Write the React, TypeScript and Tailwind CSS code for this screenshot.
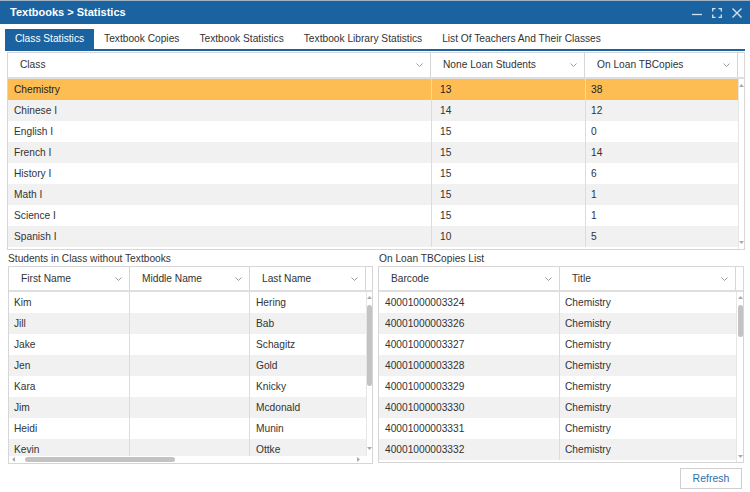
import React from "react";

const classes = [
  { name: "Chemistry", none: "13", loan: "38" },
  { name: "Chinese I", none: "14", loan: "12" },
  { name: "English I", none: "15", loan: "0" },
  { name: "French I", none: "15", loan: "14" },
  { name: "History I", none: "15", loan: "6" },
  { name: "Math I", none: "15", loan: "1" },
  { name: "Science I", none: "15", loan: "1" },
  { name: "Spanish I", none: "10", loan: "5" },
];

const students = [
  ["Kim", "Hering"],
  ["Jill", "Bab"],
  ["Jake", "Schagitz"],
  ["Jen", "Gold"],
  ["Kara", "Knicky"],
  ["Jim", "Mcdonald"],
  ["Heidi", "Munin"],
  ["Kevin", "Ottke"],
];

const barcodes = [
  "40001000003324",
  "40001000003326",
  "40001000003327",
  "40001000003328",
  "40001000003329",
  "40001000003330",
  "40001000003331",
  "40001000003332",
];

const tabs = [
  "Class Statistics",
  "Textbook Copies",
  "Textbook Statistics",
  "Textbook Library Statistics",
  "List Of Teachers And Their Classes",
];

function Chevron() {
  return (
    <svg width="7" height="4" viewBox="0 0 7 4" className="shrink-0">
      <polyline points="0.5,0.5 3.5,3.5 6.5,0.5" fill="none" stroke="#9a9a9a" strokeWidth="1" />
    </svg>
  );
}

function Arrow({ dir }: { dir: "up" | "down" | "left" | "right" }) {
  const d =
    dir === "up"
      ? "M0 3 L2.5 0 L5 3Z"
      : dir === "down"
      ? "M0 0 L2.5 3 L5 0Z"
      : dir === "left"
      ? "M3 0 L0 2.5 L3 5Z"
      : "M0 0 L3 2.5 L0 5Z";
  const w = dir === "up" || dir === "down" ? 5 : 3;
  const h = dir === "up" || dir === "down" ? 3 : 5;
  return (
    <svg width={w} height={h} viewBox={`0 0 ${w} ${h}`} className="shrink-0">
      <path d={d} fill="#a9a9a9" />
    </svg>
  );
}

function HeadCell({ label, w }: { label: string; w: string }) {
  return (
    <div className={`${w} h-full flex items-center justify-between pl-[12px] pr-[7px] border-r border-[#d6d6d6]`}>
      <span>{label}</span>
      <Chevron />
    </div>
  );
}

export default function App() {
  return (
    <div className="w-[750px] h-[492px] bg-white flex flex-col text-[10.2px] text-[#333] font-['Liberation_Sans',Arial,sans-serif] overflow-hidden">
      {/* title bar */}
      <div className="h-[24px] shrink-0 bg-[#1a63a0] border-t border-[#9fb3c5] flex items-center justify-between pl-[10px] pr-[8px]">
        <span className="text-white font-bold text-[11px]">Textbooks &gt; Statistics</span>
        <div className="flex items-center gap-[10px]">
          <svg width="10" height="10" viewBox="0 0 10 10">
            <line x1="0" y1="6.5" x2="10" y2="6.5" stroke="#d3e2ef" strokeWidth="1.3" />
          </svg>
          <svg width="10" height="10" viewBox="0 0 10 10">
            <path
              d="M0.7 3.5 V0.7 H3.5 M6.5 0.7 H9.3 V3.5 M9.3 6.5 V9.3 H6.5 M3.5 9.3 H0.7 V6.5"
              fill="none"
              stroke="#d3e2ef"
              strokeWidth="1.3"
            />
          </svg>
          <svg width="10" height="10" viewBox="0 0 10 10">
            <path d="M0.5 0.5 L9.5 9.5 M9.5 0.5 L0.5 9.5" stroke="#d3e2ef" strokeWidth="1.4" />
          </svg>
        </div>
      </div>

      {/* tabs */}
      <div className="mx-[5px] mt-[5px] h-[22px] shrink-0 flex border-b-2 border-[#1a63a0]">
        {tabs.map((t, i) => (
          <div
            key={t}
            className={`h-full flex items-center px-[10px] ${
              i === 0 ? "bg-[#1a63a0] text-white" : "text-[#333]"
            }`}
          >
            {t}
          </div>
        ))}
      </div>

      {/* class statistics grid */}
      <div className="ml-[7px] mt-[1px] w-[738px] h-[198px] shrink-0 border border-[#d6d6d6] flex flex-col">
        <div className="h-[26px] shrink-0 flex border-b-2 border-[#dedede]">
          <HeadCell label="Class" w="w-[423px]" />
          <HeadCell label="None Loan Students" w="w-[154px]" />
          <HeadCell label="On Loan TBCopies" w="w-[153px]" />
          <div className="w-[6px]" />
        </div>
        <div className="flex-1 flex">
          <div className="w-[730px] flex flex-col">
            {classes.map((c, i) => (
              <div
                key={c.name}
                className={`h-[21px] shrink-0 flex ${
                  i === 0 ? "bg-[#febd52] text-[#222]" : i % 2 === 1 ? "bg-[#f1f1f1]" : "bg-white"
                }`}
              >
                <div className="w-[423px] flex items-center pl-[6px]">{c.name}</div>
                <div className="w-[154px] flex items-center pl-[8px] border-l border-[#dcdcdc]">{c.none}</div>
                <div className="w-[153px] flex items-center pl-[5px] border-l border-[#dcdcdc]">{c.loan}</div>
              </div>
            ))}
          </div>
          <div className="w-[6px] flex flex-col items-center justify-between pt-[5px] pb-[5px] border-l border-[#e6e6e6]">
            <Arrow dir="up" />
            <Arrow dir="down" />
          </div>
        </div>
      </div>

      {/* labels */}
      <div className="h-[16px] shrink-0 flex items-center">
        <div className="w-[378px] pl-[8px] pt-[2px]">Students in Class without Textbooks</div>
        <div className="pl-[1px] pt-[2px]">On Loan TBCopies List</div>
      </div>

      {/* bottom grids */}
      <div className="h-[198px] shrink-0 flex">
        {/* students */}
        <div className="ml-[8px] w-[365px] h-full border border-[#d6d6d6] flex flex-col">
          <div className="h-[25px] shrink-0 flex border-b-2 border-[#dedede]">
            <HeadCell label="First Name" w="w-[121px]" />
            <HeadCell label="Middle Name" w="w-[120px]" />
            <HeadCell label="Last Name" w="w-[116px]" />
            <div className="w-[6px]" />
          </div>
          <div className="flex-1 flex flex-col min-h-0">
            <div className="flex-1 flex min-h-0">
              <div className="w-[357px] flex flex-col overflow-hidden">
                {students.map(([first, last], i) => (
                  <div
                    key={first}
                    className={`h-[21px] shrink-0 flex ${i % 2 === 1 ? "bg-[#f1f1f1]" : "bg-white"}`}
                  >
                    <div className="w-[121px] flex items-center pl-[5px] border-r border-[#dcdcdc]">{first}</div>
                    <div className="w-[120px] border-r border-[#dcdcdc]" />
                    <div className="w-[116px] flex items-center pl-[6px]">{last}</div>
                  </div>
                ))}
              </div>
              <div className="w-[6px] flex flex-col items-center pt-[4px] pb-[6px] border-l border-[#e6e6e6]">
                <Arrow dir="up" />
                <div className="mt-[6px] w-[5px] h-[81px] rounded-full bg-[#c3c3c3]" />
                <div className="flex-1" />
                <Arrow dir="down" />
              </div>
            </div>
            <div className="h-[7px] shrink-0 flex items-center">
              <div className="w-[357px] flex items-center pl-[3px] pr-[6px]">
                <Arrow dir="left" />
                <div className="ml-[10px] w-[150px] h-[5px] rounded-full bg-[#c3c3c3]" />
                <div className="flex-1" />
                <Arrow dir="right" />
              </div>
            </div>
          </div>
        </div>

        {/* barcodes */}
        <div className="ml-[5px] w-[366px] h-[197px] border border-[#d6d6d6] flex flex-col">
          <div className="h-[25px] shrink-0 flex border-b-2 border-[#dedede]">
            <HeadCell label="Barcode" w="w-[181px]" />
            <HeadCell label="Title" w="w-[176px]" />
            <div className="w-[7px]" />
          </div>
          <div className="flex-1 flex min-h-0">
            <div className="w-[357px] flex flex-col overflow-hidden">
              {barcodes.map((b, i) => (
                <div
                  key={b}
                  className={`h-[21px] shrink-0 flex ${i % 2 === 1 ? "bg-[#f1f1f1]" : "bg-white"}`}
                >
                  <div className="w-[181px] flex items-center pl-[6px] border-r border-[#dcdcdc]">{b}</div>
                  <div className="w-[176px] flex items-center pl-[5px]">Chemistry</div>
                </div>
              ))}
            </div>
            <div className="w-[7px] flex flex-col items-center pt-[4px] pb-[4px] border-l border-[#e6e6e6]">
              <Arrow dir="up" />
              <div className="mt-[6px] w-[5px] h-[32px] rounded-full bg-[#c3c3c3]" />
              <div className="flex-1" />
              <Arrow dir="down" />
            </div>
          </div>
        </div>
      </div>

      {/* footer */}
      <div className="flex justify-end pr-[8px] mt-[4px]">
        <button className="w-[62px] h-[21px] border border-[#cfcfcf] bg-white text-[#2f6ea9] text-[10.5px]">
          Refresh
        </button>
      </div>
    </div>
  );
}
